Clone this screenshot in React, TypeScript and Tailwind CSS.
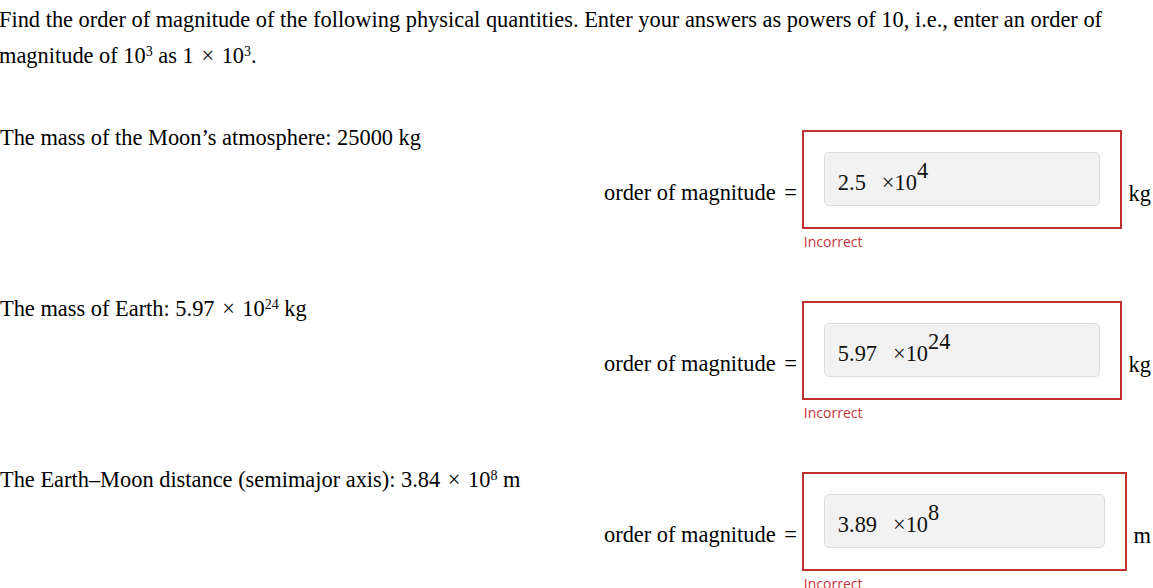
const serif = { fontFamily: '"Liberation Serif", "Times New Roman", serif' }

type Item = {
  statement: React.ReactNode
  mantissa: string
  exponent: string
  unit: string
}

const items: Item[] = [
  {
    statement: <>The mass of the Moon’s atmosphere: 25000 kg</>,
    mantissa: '2.5',
    exponent: '4',
    unit: 'kg',
  },
  {
    statement: (
      <>
        The mass of Earth: 5.97 <span className="mx-[2px]">×</span> 10<sup className="text-[14px]">24</sup> kg
      </>
    ),
    mantissa: '5.97',
    exponent: '24',
    unit: 'kg',
  },
  {
    statement: (
      <>
        The Earth–Moon distance (semimajor axis): 3.84 <span className="mx-[2px]">×</span> 10
        <sup className="text-[14px]">8</sup> m
      </>
    ),
    mantissa: '3.89',
    exponent: '8',
    unit: 'm',
  },
]

function AnswerRow({ item }: { item: Item }) {
  return (
    <div className="flex items-start">
      <div className="flex-1 text-[22.4px] leading-[19px] text-black">{item.statement}</div>
      <div className="w-[547px] mt-[2px] flex items-start">
        <span className="text-[22.4px] leading-[25px] pt-[50px] pr-[5px] whitespace-nowrap">
          order of magnitude <span className="ml-[3px]">=</span>
        </span>
        <div className="flex-1 flex flex-col">
          <div className="border-2 border-[#c0302f] px-5 pt-5 pb-[21px]">
            <div className="h-[54px] rounded-[5px] border-[1.5px] border-[#dcdcdc] bg-[#f2f2f2] flex items-center pl-[13px]">
              <span className="text-[22.4px] leading-none pt-[8px] text-[#111]">
                {item.mantissa}
                <span className="ml-[16px]">×10</span>
                <span className="relative -top-[12px]">{item.exponent}</span>
              </span>
            </div>
          </div>
          <div
            className="pl-[2px] pt-[4px] text-[14px] leading-[18px] text-[#c8323c]"
            style={{ fontFamily: '"Open Sans", sans-serif' }}
          >
            Incorrect
          </div>
        </div>
        <span className="text-[22.4px] leading-[25px] pt-[51px] pl-[7px]">{item.unit}</span>
      </div>
    </div>
  )
}

export default function App() {
  return (
    <div className="min-h-screen bg-white text-black pr-[2px]" style={serif}>
      <p className="text-[22.4px] leading-[36px] pt-[2px] -ml-px pr-[30px]">
        Find the order of magnitude of the following physical quantities. Enter your answers as powers of 10, i.e.,
        enter an order of magnitude of 10<sup className="text-[14px]">3</sup> as 1 <span className="mx-[2px]">×</span> 10
        <sup className="text-[14px]">3</sup>.
      </p>
      <div className="mt-[54px] flex flex-col gap-[48px]">
        {items.map((item, i) => (
          <AnswerRow key={i} item={item} />
        ))}
      </div>
    </div>
  )
}
